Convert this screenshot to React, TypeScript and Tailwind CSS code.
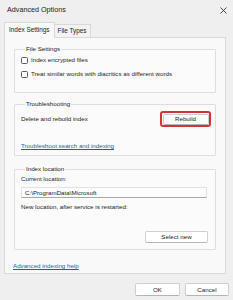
import React from "react";

function Checkbox({ label }: { label: string }) {
  return (
    <div className="flex items-center h-[8px] gap-[3px]">
      <span className="w-[7px] h-[7px] border border-[#5a5a5a] rounded-[1.5px] bg-white shrink-0" />
      <span>{label}</span>
    </div>
  );
}

function Btn({ children, className = "" }: { children: React.ReactNode; className?: string }) {
  return (
    <div
      className={
        "flex items-center justify-center bg-white border border-[#cfcfcf] border-b-[#b5b5b5] rounded-[2px] " +
        className
      }
    >
      {children}
    </div>
  );
}

export default function App() {
  return (
    <div className="w-[233px] h-[300px] bg-[#efefef] text-[#1b1b1b] font-['Liberation_Sans',Arial,sans-serif] text-[6.2px] leading-[8px] flex flex-col overflow-hidden">
      {/* title bar */}
      <div className="h-[20px] flex items-center justify-between pl-[7px] pr-[5px] shrink-0">
        <span className="text-[7.2px]">Advanced Options</span>
        <svg width="7" height="7" viewBox="0 0 7 7" className="mr-[1px]">
          <path d="M0.5 0.5 L6.5 6.5 M6.5 0.5 L0.5 6.5" stroke="#222" strokeWidth="0.8" />
        </svg>
      </div>
      {/* tabs */}
      <div className="flex items-end h-[17px] pl-[4px] shrink-0 relative z-10">
        <div className="h-[16px] px-[4px] flex items-center bg-[#f9f9f9] border border-b-0 border-[#d9d9d9] text-[6.4px] -mb-[1px] pb-[1px]">
          Index Settings
        </div>
        <div className="h-[13px] px-[3px] flex items-center border border-b-0 border-l-0 border-[#d9d9d9] text-[6.4px] bg-[#f3f3f3]">
          File Types
        </div>
      </div>
      {/* panel */}
      <div className="ml-[4px] w-[222px] h-[237px] border border-[#d9d9d9] bg-[#f9f9f9] px-[9px] flex flex-col shrink-0">
        {/* File Settings */}
        <fieldset className="mt-[7px] border border-[#dedede] bg-[#fbfbfb] pl-[6px] pb-[14px] rounded-[1px]">
          <legend className="ml-[4px] px-[1px] leading-[8px]">File Settings</legend>
          <div className="mt-[3px] flex flex-col gap-[6px]">
            <Checkbox label="Index encrypted files" />
            <Checkbox label="Treat similar words with diacritics as different words" />
          </div>
        </fieldset>
        {/* Troubleshooting */}
        <fieldset className="mt-[7px] border border-[#dedede] bg-[#fbfbfb] pl-[6px] pr-[4px] pb-[5px] rounded-[1px]">
          <legend className="ml-[4px] px-[1px] leading-[8px]">Troubleshooting</legend>
          <div className="mt-[3px] h-[16px] flex items-center justify-between">
            <span>Delete and rebuild index</span>
            <div className="border-2 border-[#d0343a] rounded-[3px] p-[0.5px]">
              <Btn className="w-[46px] h-[11px]">Rebuild</Btn>
            </div>
          </div>
          <div className="mt-[15px] text-[#1a5fb4] underline">Troubleshoot search and indexing</div>
        </fieldset>
        {/* Index location */}
        <fieldset className="mt-[9px] border border-[#dedede] bg-[#fbfbfb] pl-[6px] pr-[7px] pb-[6px] flex flex-col rounded-[1px]">
          <legend className="ml-[4px] px-[1px] leading-[8px]">Index location</legend>
          <div className="mt-[2px]">Current location:</div>
          <div className="mt-[4px] h-[11px] mr-[1px] flex items-center pl-[3px] bg-[#fdfdfd] border border-[#e2e2e2] border-b-[#a8a8a8] rounded-[1px]">
            C:\ProgramData\Microsoft
          </div>
          <div className="mt-[5px]">New location, after service is restarted:</div>
          <Btn className="mt-[20px] self-end w-[63px] h-[12px]">Select new</Btn>
        </fieldset>
        <div className="mt-[12px] -ml-[1px] text-[#1a5fb4] underline">Advanced indexing help</div>
      </div>
      {/* footer */}
      <div className="mt-[9px] flex justify-end gap-[5px] pr-[4px]">
        <Btn className="w-[45px] h-[13px] border-[#3f6fb5] border-b-[#3f6fb5]">OK</Btn>
        <Btn className="w-[44px] h-[13px]">Cancel</Btn>
      </div>
    </div>
  );
}
